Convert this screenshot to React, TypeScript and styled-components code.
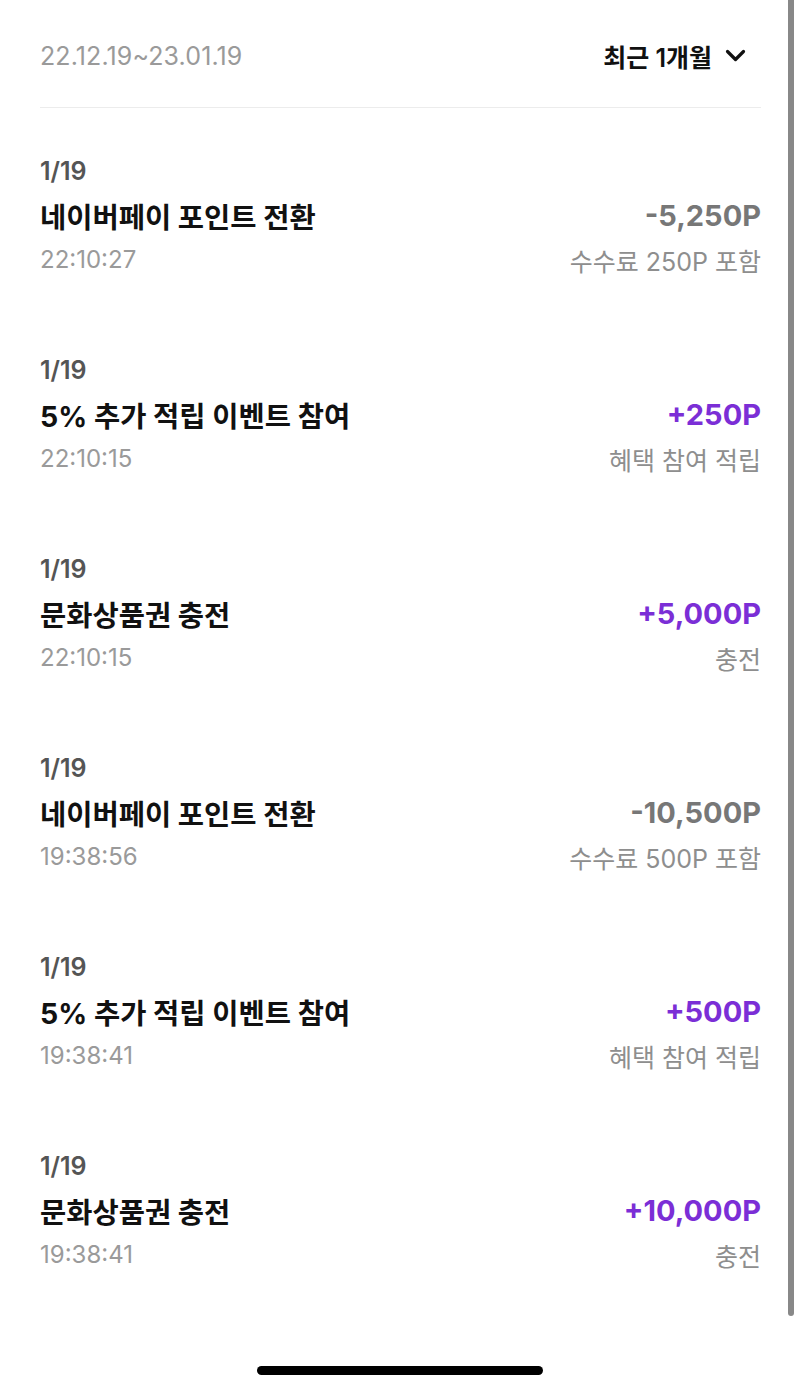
import React from "react";
import styled, { createGlobalStyle } from "styled-components";

const GlobalStyle = createGlobalStyle`
  body {
    margin: 0;
    background: #ffffff;
    font-family: Inter, "Noto Sans CJK KR", sans-serif;
  }
`;

const Page = styled.div`
  width: 800px;
  height: 1391px;
  box-sizing: border-box;
  padding: 0 39px 0 40px;
  overflow: hidden;
`;

const Header = styled.div`
  height: 108px;
  padding-top: 4px;
  box-sizing: border-box;
  display: flex;
  align-items: center;
  justify-content: space-between;
  border-bottom: 1px solid #ececec;
`;

const Period = styled.span`
  font-size: 25px;
  color: #9a9a9a;
  letter-spacing: 0.1px;
`;

const RangeButton = styled.button`
  display: flex;
  align-items: center;
  gap: 13px;
  border: none;
  background: none;
  padding: 0 15px 0 0;
  font-family: inherit;
  font-size: 25px;
  font-weight: 600;
  color: #111;
`;

const List = styled.ul`
  list-style-type: none;
  margin: 0;
  padding: 0;
`;

const Item = styled.li`
  height: 199px;
  box-sizing: border-box;
  padding-top: 40px;
  display: grid;
  grid-template-columns: 1fr auto;
  grid-template-rows: 45px 45px 43px;
  align-content: start;
  align-items: center;
`;

const DateText = styled.span`
  grid-column: 1 / 3;
  font-size: 25px;
  font-weight: 600;
  color: #555;
`;

const Title = styled.span`
  font-size: 28.5px;
  font-weight: 700;
  color: #111;
`;

const Amount = styled.span<{ $plus: boolean }>`
  font-size: 29px;
  font-weight: 700;
  text-align: right;
  color: ${(p) => (p.$plus ? "#7b2ed6" : "#777")};
`;

const Time = styled.span`
  font-size: 24px;
  color: #9a9a9a;
`;

const Note = styled.span`
  font-size: 25px;
  color: #8e8e8e;
  text-align: right;
`;

const Scrollbar = styled.div`
  position: fixed;
  top: 0;
  left: 788px;
  width: 6px;
  height: 1316px;
  background: #888;
  border-radius: 0 0 3px 3px;
`;

const HomeBar = styled.div`
  position: fixed;
  left: 257px;
  top: 1366px;
  width: 286px;
  height: 9px;
  border-radius: 5px;
  background: #000;
`;

const items = [
  { date: "1/19", title: "네이버페이 포인트 전환", time: "22:10:27", amount: "-5,250P", note: "수수료 250P 포함" },
  { date: "1/19", title: "5% 추가 적립 이벤트 참여", time: "22:10:15", amount: "+250P", note: "혜택 참여 적립" },
  { date: "1/19", title: "문화상품권 충전", time: "22:10:15", amount: "+5,000P", note: "충전" },
  { date: "1/19", title: "네이버페이 포인트 전환", time: "19:38:56", amount: "-10,500P", note: "수수료 500P 포함" },
  { date: "1/19", title: "5% 추가 적립 이벤트 참여", time: "19:38:41", amount: "+500P", note: "혜택 참여 적립" },
  { date: "1/19", title: "문화상품권 충전", time: "19:38:41", amount: "+10,000P", note: "충전" },
];

const App = () => {
  return (
    <>
      <GlobalStyle />
      <Page>
        <Header>
          <Period>22.12.19~23.01.19</Period>
          <RangeButton>
            최근 1개월
            <svg width="21" height="13" viewBox="0 0 21 13">
              <polyline
                points="2.5,2.5 10.5,10.5 18.5,2.5"
                fill="none"
                stroke="#111"
                strokeWidth="3.2"
                strokeLinecap="round"
                strokeLinejoin="round"
              />
            </svg>
          </RangeButton>
        </Header>
        <List>
          {items.map((it, i) => (
            <Item key={i}>
              <DateText>{it.date}</DateText>
              <Title>{it.title}</Title>
              <Amount $plus={it.amount.startsWith("+")}>{it.amount}</Amount>
              <Time>{it.time}</Time>
              <Note>{it.note}</Note>
            </Item>
          ))}
        </List>
      </Page>
      <Scrollbar />
      <HomeBar />
    </>
  );
};

export default App;
